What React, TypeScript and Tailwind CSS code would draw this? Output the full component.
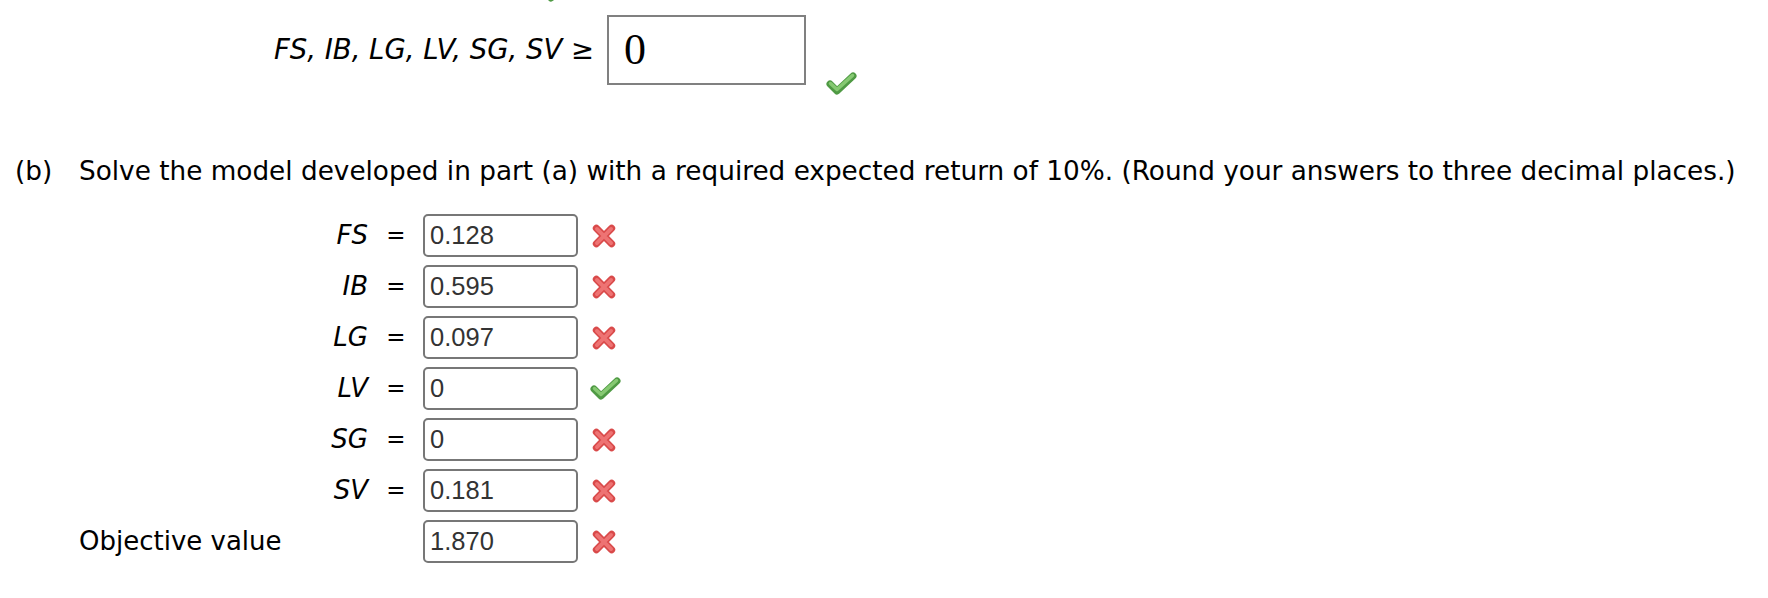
import React from 'react'

const body = { fontFamily: '"DejaVu Sans", Verdana, sans-serif' }

function Cross() {
  return (
    <svg width="24" height="24" viewBox="0 0 22 22" className="shrink-0">
      <g strokeLinecap="round">
        <path d="M4 4 L18 18 M18 4 L4 18" stroke="#d94a4a" strokeWidth="6.5" />
        <path d="M4.5 4.5 L17.5 17.5 M17.5 4.5 L4.5 17.5" stroke="#ee7373" strokeWidth="3.5" />
      </g>
    </svg>
  )
}

function Check({ className = '' }: { className?: string }) {
  return (
    <svg width="31" height="25" viewBox="0 0 31 25" className={'shrink-0 ' + className}>
      <g fill="none" strokeLinecap="round" strokeLinejoin="round">
        <path d="M4 13 L11 20 L27 5" stroke="#4f9a44" strokeWidth="7" />
        <path d="M4.5 12.5 L11 18.5 L26.5 4.5" stroke="#86c972" strokeWidth="3.5" />
      </g>
    </svg>
  )
}

const rows: { v: string; value: string; ok: boolean }[] = [
  { v: 'FS', value: '0.128', ok: false },
  { v: 'IB', value: '0.595', ok: false },
  { v: 'LG', value: '0.097', ok: false },
  { v: 'LV', value: '0', ok: true },
  { v: 'SG', value: '0', ok: false },
  { v: 'SV', value: '0.181', ok: false },
]

function Answer({ value }: { value: string }) {
  return (
    <div
      className="w-[155px] h-[43px] border-2 border-[#777] rounded-[5px] px-[5px] flex items-center text-[25.5px] text-[#333] shrink-0"
      style={{ fontFamily: '"Liberation Sans", Arial, sans-serif' }}
    >
      {value}
    </div>
  )
}

export default function App() {
  return (
    <div className="w-[1768px] h-[598px] bg-white text-black overflow-hidden" style={body}>
      {/* tail of the check from the row above */}
      <div className="h-0 relative">
        <div className="absolute left-[540px] top-[-22px]">
          <Check />
        </div>
      </div>

      <div className="flex items-start pt-[15px]">
        <div className="w-[595px] h-[70px] flex items-center justify-end pr-[1px] text-[27.5px] italic">
          FS, IB, LG, LV, SG, SV ≥
        </div>
        <div
          className="ml-[12px] w-[199px] h-[70px] border-2 border-[#808080] flex items-center pl-[15px] text-[44px]"
          style={{ fontFamily: '"Liberation Serif", serif' }}
        >
          0
        </div>
        <Check className="ml-[20px] mt-[56px]" />
      </div>

      <div className="flex mt-[59px] text-[26.3px] leading-[32px]">
        <span className="w-[79px] pl-[15px]">(b)</span>
        <span>
          Solve the model developed in part (a) with a required expected return of 10%. (Round your answers to three decimal places.)
        </span>
      </div>

      <div className="ml-[79px] mt-[27px] flex flex-col gap-[8px]">
        {rows.map((r) => (
          <div key={r.v} className="flex items-center h-[43px]">
            <div className="w-[290px] text-right text-[26px] italic pr-[1px]">{r.v}</div>
            <div className="w-[54px] text-center text-[23px]">=</div>
            <Answer value={r.value} />
            <div className="ml-[14px] flex items-center">{r.ok ? <Check className="-ml-[2px]" /> : <Cross />}</div>
          </div>
        ))}
        <div className="flex items-center h-[43px]">
          <div className="w-[344px] text-[26px]">Objective value</div>
          <Answer value="1.870" />
          <div className="ml-[14px] flex items-center">
            <Cross />
          </div>
        </div>
      </div>
    </div>
  )
}
